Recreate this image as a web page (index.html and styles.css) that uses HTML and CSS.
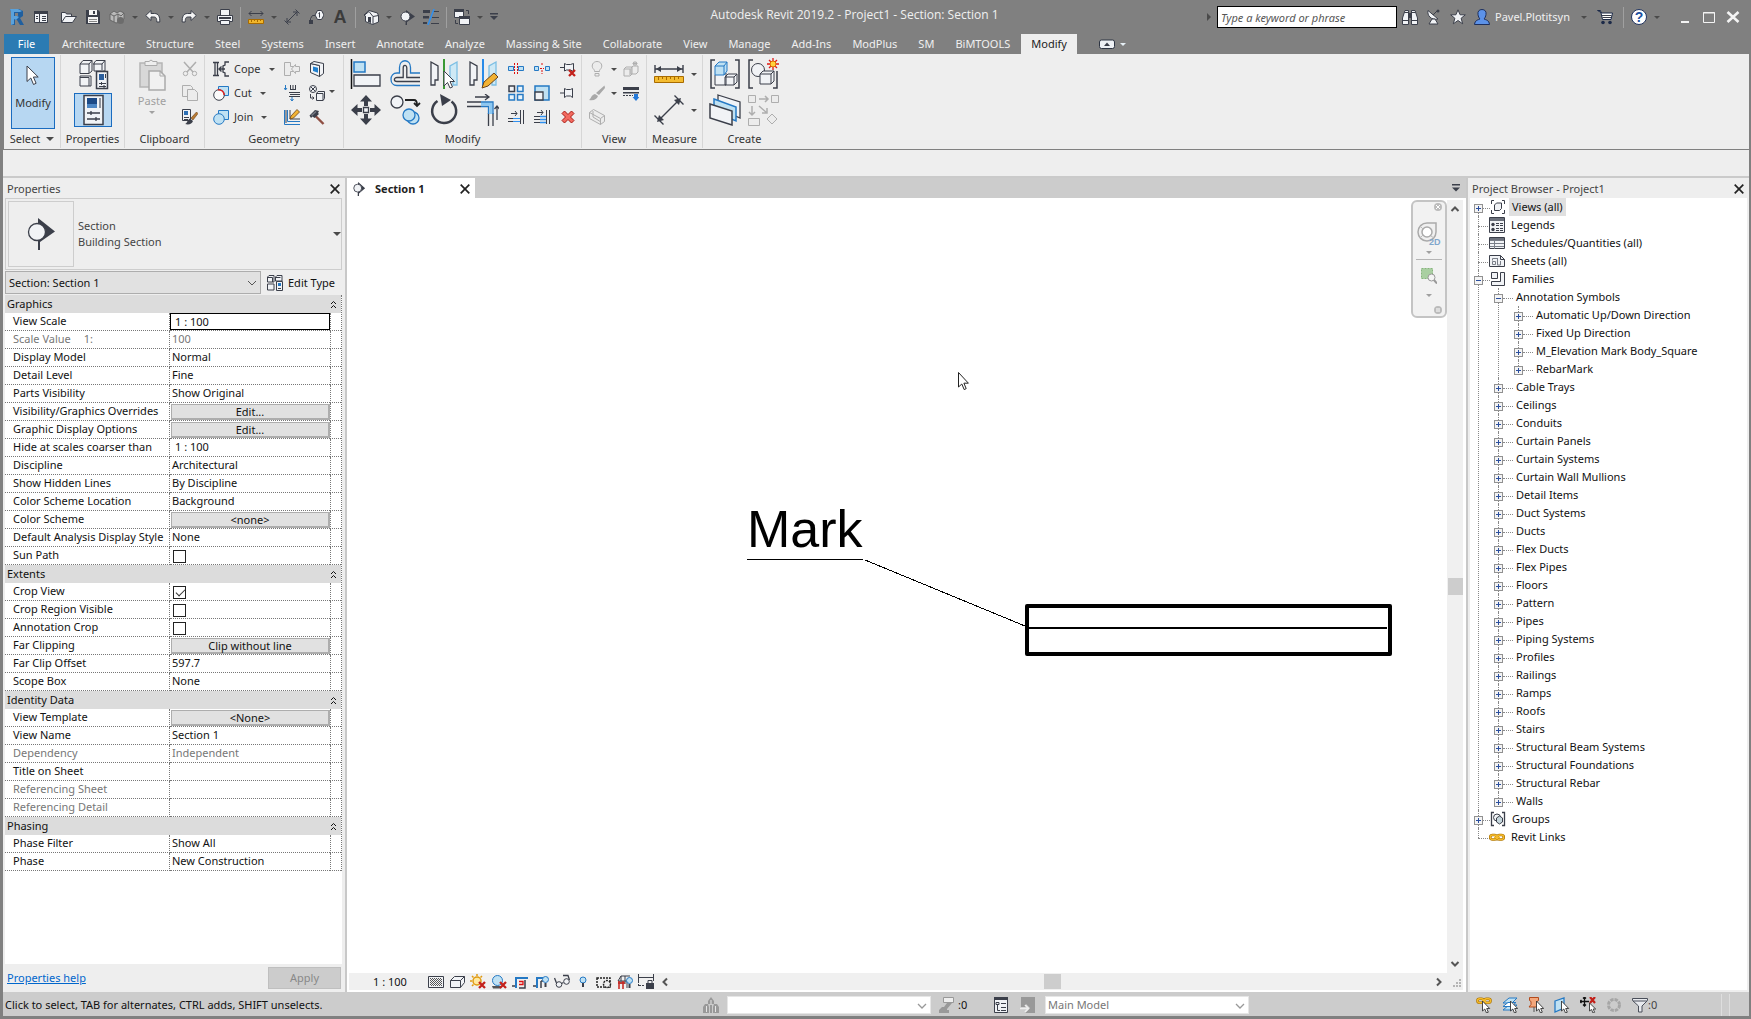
FILE: index.html
```html
<!DOCTYPE html>
<html lang="en">
<head>
<meta charset="utf-8">
<title>Autodesk Revit 2019.2 - Project1 - Section: Section 1</title>
<link rel="stylesheet" href="styles.css">
</head>
<body>
<div class="window">

<header class="titlebar">
  <div class="qat">
    <button class="cell" aria-label="Revit"><svg class="i16" viewBox="0 0 16 16"><path fill="#1f5f9f" d="M1 0h9l4 2v5l-3 2 4 7h-4L8 11H6v5H2V3z"/><path fill="#5aa2dc" d="M1 0h8l4 2-2 1H5v4h3l2 1-3 3-2-1v5l-3 1V3z"/><path fill="#808080" d="M6 4h3v3H6z"/></svg></button>
    <button class="cell after-gap" aria-label="Home"><svg class="i16" viewBox="0 0 16 16"><path class="kf" d="M1.500 2.500h13v11h-13z"/><path class="d" d="M1 2h14v3H1z"/><path class="k" d="M6.500 5v8M9 7.500h4M9 9.500h4M9 11.500h4M3 7.500h2M3 9.500h2"/></svg></button>
    <button class="cell" aria-label="Open"><svg class="i16" viewBox="0 0 16 16"><path class="kf" d="M.5 13.500v-10h4l1 1.500h5v3"/><path class="kf" d="M.5 13.500l4-6h11l-4 6z"/></svg></button>
    <button class="cell" aria-label="Save"><svg class="i16" viewBox="0 0 16 16"><path class="d" d="M1 1h12l2 2v12H1z"/><path fill="#f4f4f4" d="M4 1h8v5H4zM3 8h10v6H3z"/><path class="d" d="M8 2h2v3H8z"/><path stroke="#888" d="M4 10.500h8M4 12.500h8"/></svg></button>
    <button class="cell" aria-label="Synchronize"><svg class="i16" viewBox="0 0 16 16"><path fill="#b9b9b9" stroke="#676767" d="M1 5l4-3 3 2 3-2 4 2v6l-4 3-4 1-6-3z"/><path fill="none" stroke="#676767" d="M1 5l4 2 4-2 3 2 3-3M5 7v6M9 5v8"/><circle cx="11.500" cy="11.500" r="3.500" fill="#6c6c6c"/></svg></button>
    <span class="drop"><i class="tri"></i></span>
    <button class="cell" aria-label="Undo"><svg class="i16" viewBox="0 0 16 16"><path fill="#f4f4f4" stroke="#3b3f4a" d="M.7 6.500L6 1.500v3h3.500c4 0 5.500 3 5.300 8.500h-3c0-4-.8-5-3-5H6v3.500z"/></svg></button>
    <span class="drop"><i class="tri"></i></span>
    <button class="cell" aria-label="Redo"><svg class="i16" viewBox="0 0 16 16"><path fill="#f4f4f4" stroke="#3b3f4a" d="M15.300 6.500L10 1.500v3H6.500C2.500 4.500 1 7.500 1.200 13h3c0-4 .8-5 3-5H10v3.500z"/></svg></button>
    <span class="drop"><i class="tri"></i></span>
    <button class="cell" aria-label="Print"><svg class="i16" viewBox="0 0 16 16"><path class="kf" d="M3.500 7V.5h9V7M.5 6.500h15v6H.5z"/><path class="d" d="M2 8h12v2H2z"/><path class="kf" d="M3.500 11.500h9v4h-9z"/></svg></button>
    <i class="bar"></i>
    <button class="cell" aria-label="Measure"><svg class="i16" viewBox="0 0 16 16"><path class="k" d="M1 4.500h14M3.500 2L1 4.500 3.500 7M12.500 2L15 4.500 12.500 7"/><path fill="#f0b62c" stroke="#a86b00" d="M.5 10.500h15v4H.5z"/><path stroke="#a86b00" d="M3.500 10v3M6.500 10v2M9.500 10v3M12.500 10v2"/></svg></button>
    <span class="drop"><i class="tri"></i></span>
    <button class="cell" aria-label="Aligned Dimension"><svg class="i16" viewBox="0 0 16 16"><path class="k" d="M3 13L13 3M3 9v4h4M9 3h4v4M.5 11.500l4 4M11.500.5l4 4"/></svg></button>
    <button class="cell" aria-label="Tag by Category"><svg class="i16" viewBox="0 0 16 16"><path class="k" d="M2.500 13V9.500l2-3h3"/><path class="d" d="M1 11h4v4H1z"/><path class="kf" d="M7 6l2.500-4.500h4L16 6l-2.500 4.500h-4z"/><path class="k" d="M10.500 4.500l1-1v5"/></svg></button>
    <button class="cell glyph-a" aria-label="Text">A</button>
    <i class="bar"></i>
    <button class="cell" aria-label="Default 3D View"><svg class="i16" viewBox="0 0 16 16"><path class="kf" d="M1 6l5-4.500L14.500 4 15.500 7v6l-6 2.500-7-3V7z"/><path class="k" d="M1 6.500l5-4 4 5v8M10 7.500l5.500-1"/><path class="d" d="M5 8h3v6l-3-1z"/></svg></button>
    <span class="drop"><i class="tri"></i></span>
    <button class="cell" aria-label="Section"><svg class="i16" viewBox="0 0 16 16"><path class="d" d="M7 1l9 6.500L8 13v3H6.500z"/><circle class="kf" cx="6.500" cy="7.500" r="4.500"/></svg></button>
    <button class="cell" aria-label="Thin Lines"><svg class="i16" viewBox="0 0 16 16"><path class="d" d="M0 1h7v3H0zM0 7h6v2.500H0zM0 13h4v2H0z"/><path class="k" d="M10 2.500h6M9 8.500h7M8 14.500h8"/><path stroke="#2f90f0" stroke-width="1.500" d="M11 0L5 16"/></svg></button>
    <i class="bar"></i>
    <button class="cell" aria-label="Switch Windows"><svg class="i16" viewBox="0 0 16 16"><path class="kf" d="M.5.5h9v8h-9z"/><path class="d" d="M0 0h10v3H0zM5 7h11v3H5z"/><path class="kf" d="M5.500 9.500h10v6h-10z"/><path class="k" d="M12 1.500h2.500V5M1.500 11v3.500H4"/></svg></button>
    <span class="drop"><i class="tri"></i></span>
    <button class="cell narrow" aria-label="Customize toolbar"><svg class="i10" viewBox="0 0 10 10"><path class="d" d="M1 1h8v1.500H1zM1 4h8L5 8z"/></svg></button>
  </div>
  <h1 class="caption">Autodesk Revit 2019.2 - Project1 - Section: Section 1</h1>
  <div class="infocenter">
    <i class="tri-right"></i>
    <input class="search" type="text" placeholder="Type a keyword or phrase" aria-label="Search">
    <button class="cell" aria-label="Find"><svg class="i16" viewBox="0 0 16 16"><path class="kf" d="M.5 15.500V9L3 1.500h3.500v14zM15.500 15.500V9L13 1.500H9.500v14z"/><path class="d" d="M6 4h4v5H6z"/><path class="k" d="M0 11.500h6M10 11.500h6M2.500 3.500h4M9.500 3.500h4"/></svg></button>
    <button class="cell" aria-label="Subscription"><svg class="i16" viewBox="0 0 16 16"><path class="kf" d="M2 1.500c-1 5 3 10 10 8.500z"/><path class="k" d="M7 6l5-5"/><circle class="d" cx="12" cy="2" r="1.500"/><path class="kf" d="M6 10l-3 5h9l-3-5z"/></svg></button>
    <button class="cell" aria-label="Favorites"><svg class="i16" viewBox="0 0 16 16"><path class="kf" d="M8 .8l2.100 5h5.200l-4.200 3.500 1.600 5.500L8 11.500l-4.700 3.300 1.600-5.500L.7 5.800h5.200z"/></svg></button>
    <button class="cell user" aria-label="Signed in as Pavel.Plotitsyn"><svg class="i16" viewBox="0 0 16 16"><path fill="#5c92e8" stroke="#1d2f5c" d="M8 .5c3 0 4.500 2 4 5-.3 2-1 3.500-2 4.500 2 1 5 1 5.500 5.500H.5C1 11 4 11 6 10 5 9 4.300 7.500 4 5.500c-.5-3 1-5 4-5z"/></svg><span>Pavel.Plotitsyn</span></button>
    <span class="drop wide"><i class="tri"></i></span>
    <button class="cell" aria-label="App Store"><svg class="i16" viewBox="0 0 16 16"><path fill="#fff" stroke="#1c2a48" d="M.5 1.500h3l2 9h8.500l1.500-6.500H5z"/><path class="k" d="M5 6.500h9.500M5.500 8.500H14"/><circle cx="6" cy="13.500" r="1.800" fill="#1c2a48"/><circle cx="13" cy="13.500" r="1.800" fill="#1c2a48"/></svg></button>
    <i class="bar roomy"></i>
    <button class="cell" aria-label="Help"><svg class="i16" viewBox="0 0 16 16"><circle cx="8" cy="8" r="7.500" fill="#fff" stroke="#223560"/><text x="8" y="13" text-anchor="middle" class="glyph-q">?</text></svg></button>
    <span class="drop"><i class="tri"></i></span>
    <div class="winbtns">
      <button aria-label="Minimize"><svg class="i14" viewBox="0 0 14 14"><path stroke="#f4f4f4" stroke-width="2" d="M3 12h8"/></svg></button>
      <button aria-label="Maximize"><svg class="i14" viewBox="0 0 14 14"><path stroke="#f4f4f4" fill="none" d="M1.500 2.500h11v10h-11z"/><path stroke="#f4f4f4" d="M1 3h12"/></svg></button>
      <button aria-label="Close"><svg class="i14" viewBox="0 0 14 14"><path stroke="#f4f4f4" stroke-width="2.600" d="M1.500 2l11 10M12.500 2l-11 10"/></svg></button>
    </div>
  </div>
</header>

<nav class="tabs">
  <button class="tab file">File</button>
  <button class="tab">Architecture</button>
  <button class="tab">Structure</button>
  <button class="tab">Steel</button>
  <button class="tab">Systems</button>
  <button class="tab">Insert</button>
  <button class="tab">Annotate</button>
  <button class="tab">Analyze</button>
  <button class="tab">Massing &amp; Site</button>
  <button class="tab">Collaborate</button>
  <button class="tab">View</button>
  <button class="tab">Manage</button>
  <button class="tab">Add-Ins</button>
  <button class="tab">ModPlus</button>
  <button class="tab">SM</button>
  <button class="tab">BiMTOOLS</button>
  <button class="tab active">Modify</button>
  <button class="tab state" aria-label="Minimize ribbon"><svg class="i16" viewBox="0 0 16 16"><rect x=".5" y="4" width="15" height="8.500" rx="2" fill="#eef1f5" stroke="#2d3442"/><path class="d" d="M5 10h6L8 6.500z"/></svg><i class="tri light"></i></button>
</nav>

<section class="ribbon">
  <div class="panel p-select">
    <div class="body">
      <button class="modify-btn"><svg class="cursor-ico" viewBox="0 0 14 22"><path fill="#fff" stroke="#3b3f4a" d="M1 1v15.500l3.800-3.500 2.700 6.500 2.600-1.200-2.700-6.300h4.800z"/></svg><span>Modify</span></button>
    </div>
    <h2>Select <i class="tri big"></i></h2>
  </div>
  <div class="panel p-props">
    <div class="body">
      <button class="props-ico" aria-label="Type Properties"><svg class="i32" viewBox="0 0 32 32"><path class="kf" d="M3 6l3-3.500h9V13l-3 2.500H3zM17 5l2-2.500h9V13H17zM3 18h11v10H3z"/><path class="k" d="M3 6h9v9M12 6l3-3.500M3 19.500h9v8.500M16 6h9v6M25 6l3-3.500"/><path class="kf" stroke-width="1.500" d="M19.500 13.500h11v17h-11z"/><path fill="#2c5f9e" d="M22 16h5v6h-5z"/><path class="k" d="M28.500 16v4M22 25.500h7M22 28.500h7M24.500 24v3M27 27v3"/></svg></button>
      <button class="props-on" aria-label="Properties"><svg class="i32" viewBox="0 0 32 32"><path class="kf" stroke-width="1.500" d="M7 1.500h19v29H7z"/><path fill="#1d4a86" d="M10 4h10v10H10z"/><path fill="#4d86c4" d="M10 10h10v4H10z"/><path fill="none" stroke="#6f7480" stroke-width="1.500" d="M23 4v10"/><path class="k" stroke-width="1.300" d="M10 19h13M10 25h13M14 17v4M19 23v4"/></svg></button>
    </div>
    <h2>Properties</h2>
  </div>
  <div class="panel p-clip">
    <div class="body">
      <button class="paste" disabled><svg class="i32" viewBox="0 0 32 32"><path fill="#d8d8d8" stroke="#b5b5b5" stroke-width="1.500" d="M4 4h22v24H4z"/><path fill="#eee" stroke="#aaa" d="M9 2.500h4L15 1l2 1.500h4v4H9z"/><path fill="#f1f1f1" stroke="#aaa" stroke-width="1.500" d="M13 12h11l5 5v14H13z"/><path fill="none" stroke="#aaa" d="M24 12v5h5"/></svg><span>Paste</span><i class="tri grey"></i></button>
      <div class="col3">
        <button aria-label="Cut to Clipboard"><svg class="i16" viewBox="0 0 16 16"><path class="g" stroke-width="1.500" d="M2 1l9 10M14 1L5 11"/><circle class="g" cx="3.500" cy="12.500" r="2.200"/><circle class="g" cx="12.500" cy="12.500" r="2.200"/></svg></button>
        <button aria-label="Copy to Clipboard"><svg class="i16" viewBox="0 0 16 16"><path class="gf" d="M.5.5h8l2 2v9H.5z"/><path class="gf" d="M5.500 4.500h7l3 3v8h-10z"/></svg></button>
        <button aria-label="Match Type Properties"><svg class="i16" viewBox="0 0 16 16"><path class="kf" d="M.5.500h8v11h-8z"/><path fill="#2c6fb4" d="M2 2h4v4H2z"/><path class="k" d="M2 8.500h5M2 10.500h4"/><path fill="#b87a33" stroke="#6b431a" stroke-width=".6" d="M9 9l5.500-6 1.500 1.500L11 11z"/><path class="d" d="M3 15c2 0 2-4 5-5.500L11 12c-1 3-4 4-8 3z"/></svg></button>
      </div>
    </div>
    <h2>Clipboard</h2>
  </div>
  <div class="panel p-geo">
    <div class="body">
      <div class="col3 named">
        <button><svg class="i16" viewBox="0 0 16 16"><path class="k" stroke-width="1.300" d="M0 1.500h6M0 14.500h6M2 1.500v13M4.500 1.500v13M16 1h-4v3l-2 1v6l2 1v3h4"/><path class="k" stroke-width="1.400" d="M6 8h6M8.500 5.500L6 8l2.500 2.500"/></svg><span>Cope</span><i class="tri"></i></button>
        <button><svg class="i16" viewBox="0 0 16 16"><path class="bf" d="M5.500 1.500h10v9h-10z"/><circle cx="6" cy="10" r="5.300" fill="#fafafa" stroke="#3b3f4a"/><path fill="none" stroke="#e02020" stroke-width="1.500" d="M5 4.700c3.500-.3 6 2 6.200 5.300"/></svg><span>Cut</span><i class="tri"></i></button>
        <button><svg class="i16" viewBox="0 0 16 16"><path class="bf" d="M5.500 1.500h10v9h-10z"/><circle class="bf" cx="6" cy="10" r="5.300"/></svg><span>Join</span><i class="tri"></i></button>
      </div>
      <div class="col3">
        <button aria-label="Wall Joins"><svg class="i16" viewBox="0 0 16 16"><path class="gf" d="M.5 1.500h6v4h4v5h-4v4h-6z"/><path class="gf" d="M15.500 5.500h-4v-2L7.500 8l4 4.500v-2h4z"/></svg></button>
        <button aria-label="Beam Joins"><svg class="i16" viewBox="0 0 16 16"><path class="k" d="M5 7.500h11M5 11.500h11M6 9.500h10M6.500 0v4M9 0v4M11.500 0v4M6 4.500h6"/><path class="b" d="M1.500 0v5M0 3l1.500 2L3 3M8 12v4M6.500 14L8 16l1.500-2"/></svg></button>
        <button aria-label="Edit Joins"><svg class="i16" viewBox="0 0 16 16"><path class="b" d="M.5 1v14.500H16M3.500 1v11.500H16"/><path class="k" d="M6 1v9h10M2 1v13"/><path fill="#f2b233" stroke="#6b431a" stroke-width=".8" d="M6 10l1-3 6-6.500L15.500 3l-6 6z"/></svg></button>
      </div>
      <div class="col3">
        <button aria-label="Split Face"><svg class="i16" viewBox="0 0 16 16"><path class="kf" d="M1.500 2.500l9 2v11l-9-4z"/><path class="kf" d="M1.500 2.500L5 .5l9.500 2v10l-4 3v-11z"/><path fill="#1f80d0" d="M4 5.500l5 1.300v5L4 10z"/></svg></button>
        <button aria-label="Paint"><svg class="i16" viewBox="0 0 16 16"><circle class="kf" cx="4" cy="4" r="3.500"/><path class="k" d="M2 2l4 4M2 6l4-4M1.500 9v4H5M3.500 11.500L5 13l-1.500 1.500"/><path class="kf" d="M7.500 8.500l1.500-2h6.500v7L14 15.500H7.500z"/><path class="k" d="M7.500 8.500H14v7"/></svg></button>
        <button aria-label="Demolish"><svg class="i16" viewBox="0 0 16 16"><path stroke="#8f4f43" stroke-width="2.400" d="M6 6.500l8.500 8.500"/><path class="d" d="M.5 6.500L6 1l4 1-1 2 1 1-4.500 4-2-1.500L2 9z"/><path stroke="#777b85" stroke-width="1.500" d="M2.500 6.500L7 2.500"/></svg></button>
      </div>
      <span class="mid-tri"><i class="tri"></i></span>
    </div>
    <h2>Geometry</h2>
  </div>
  <div class="panel p-mod">
    <div class="body">
      <div class="big-grid">
        <button aria-label="Align"><svg class="i32" viewBox="0 0 32 32"><path stroke="#111" stroke-width="1.500" d="M1.500 1v30"/><path class="bf" stroke-width="1.500" d="M4 4h11v10H4z"/><path class="kf" stroke-width="1.300" d="M4 17h26v11H4z"/></svg></button>
        <button aria-label="Offset"><svg class="i32" viewBox="0 0 32 32"><path fill="none" stroke="#2579c4" stroke-width="1.300" d="M31 15h-9.500V9.500c0-9-11-9-11 0V15H8C0 15 0 27.500 8 27.500h23"/><path fill="none" stroke="#3b3f4a" stroke-width="1.300" d="M31 19.500H17.800V10c0-3.500-3.600-3.500-3.600 0v9.500H8c-3.500 0-3.500 4 0 4h23"/></svg></button>
        <button aria-label="Mirror - Pick Axis"><svg class="i32" viewBox="0 0 32 32"><path class="kf" stroke-width="1.300" d="M3 4l7 4v14H7v5H3z"/><path fill="#cfe9f5" stroke="#7dbfe4" stroke-width="1.300" d="M29 4l-7 4v14h3v5h4z"/><path stroke="#3a9a34" stroke-width="2" d="M16 1v30"/><path fill="#fff" stroke="#3b3f4a" d="M16 13v15l3.500-3.500 2.500 5.500 2.500-1-2.500-5.500h4.500z"/></svg></button>
        <button aria-label="Mirror - Draw Axis"><svg class="i32" viewBox="0 0 32 32"><path class="kf" stroke-width="1.300" d="M3 4l7 4v14H7v5H3z"/><path fill="#cfe9f5" stroke="#7dbfe4" stroke-width="1.300" d="M29 4l-7 4v14h3v5h4z"/><path stroke="#2a8be8" stroke-width="2" d="M16 1v28"/><path fill="#f2b233" stroke="#6b431a" d="M15 30l2-6 10-9 4 4-10 9z"/></svg></button>
        <button aria-label="Move"><svg class="i32" viewBox="0 0 32 32"><path class="d" d="M16 1l6 6.500h-4V12h-4V7.500h-4zM16 31l6-6.500h-4V20h-4v4.500h-4zM1 16l6.500-6v4H12v4H7.500v4zM31 16l-6.500-6v4H20v4h4.500v4z"/><path class="kf" stroke-width="1.300" d="M13.500 13.500h5v5h-5z"/></svg></button>
        <button aria-label="Copy"><svg class="i32" viewBox="0 0 32 32"><circle class="kf" cx="8" cy="8" r="6" stroke-width="1.300"/><path fill="none" stroke="#222" stroke-width="1.800" d="M16 6h9c2 0 3 1 3 5M25 9l3 3 3-3"/><circle class="bf" cx="24" cy="24" r="6" stroke-width="1.300"/><circle class="bf" cx="20" cy="21" r="6" stroke-width="1.300"/></svg></button>
        <button aria-label="Rotate"><svg class="i32" viewBox="0 0 32 32"><path fill="none" stroke="#3b3f4a" stroke-width="2.500" d="M23.500 7.500a12 12 0 1 1-14-.5"/><path class="d" d="M12 0l11 6-9 6z"/></svg></button>
        <button aria-label="Trim/Extend to Corner"><svg class="i32" viewBox="0 0 32 32"><path class="k" stroke-width="1.300" d="M0 8h14M0 12.500h14M21.500 19v13M26 19v13M8 3h13M18 0l4 3-4 3M30 26V12M27.500 15l2.500-3 2.500 3"/><path fill="none" stroke="#8cc8f2" stroke-width="3" d="M14 10h10v10"/><path fill="none" stroke="#2579c4" stroke-width="1.300" d="M14 8h12v12M14 12.500h7.500V20"/></svg></button>
      </div>
      <div class="small-grid">
        <button aria-label="Split Element"><svg class="i16" viewBox="0 0 16 16"><path class="bf" d="M.5 5.500h5v4h-5zM10.500 5.500h5v4h-5z"/><path stroke="#d11" stroke-dasharray="2 1" d="M6.500 2v11M9.500 2v11"/></svg></button>
        <button aria-label="Split with Gap"><svg class="i16" viewBox="0 0 16 16"><path class="bf" d="M.5 5.500h4v4h-4zM11.500 5.500h4v4h-4z"/><path stroke="#d11" stroke-dasharray="2 1" d="M8 2v3M8 9v4M6 7.500h4"/></svg></button>
        <button aria-label="Unpin"><svg class="i16" viewBox="0 0 16 16"><path class="kf" d="M4.500 2.500l2 1h4l3-1v8l-3-1.500h-4l-2 1zM0 6.500h4"/><path stroke="#c3201a" stroke-width="2.300" d="M9 9l6 6M15 9l-6 6"/></svg></button>
        <button aria-label="Array"><svg class="i16" viewBox="0 0 16 16"><path class="kf" stroke-width="1.500" d="M1 1h5.500v5.500H1z"/><path fill="#e8f4fb" stroke="#2579c4" stroke-width="1.500" d="M9.500 1H15v5.500H9.500zM1 9.500h5.500V15H1zM9.500 9.500H15V15H9.500z"/></svg></button>
        <button aria-label="Scale"><svg class="i16" viewBox="0 0 16 16"><path class="bf" stroke-width="1.500" d="M1 1h14v14H1z"/><path class="kf" stroke-width="1.300" d="M1 7h8v8H1z"/></svg></button>
        <button aria-label="Pin"><svg class="i16" viewBox="0 0 16 16"><path class="kf" d="M4.500 3.500l2 1h4l2-1v9l-2-1.500h-4l-2 1.500zM0 8h4"/></svg></button>
        <button aria-label="Trim Single"><svg class="i16" viewBox="0 0 16 16"><path class="k" d="M12.500 1v14M15.500 1v14M3 4.500h6M7 2l2 2.500L7 7M0 9.500h5M0 12.500h5"/><path stroke="#2f90f0" d="M5 9.500h7M5 12.500h7"/></svg></button>
        <button aria-label="Trim Multiple"><svg class="i16" viewBox="0 0 16 16"><path class="k" d="M12.500 1v14M15.500 1v14M3 3.500h6M7 1l2 2.500L7 6M0 7.500h6M0 10.500h6M0 13.500h6"/><path stroke="#2f90f0" stroke-width="1.500" d="M6 7.500h6M6 10.500h6M6 13.500h6"/></svg></button>
        <button aria-label="Delete"><svg class="i16" viewBox="0 0 16 16"><path fill="#f36a60" stroke="#a81a12" d="M2 4.500L4.500 2 8 5.500 11.500 2 14 4.500 10.500 8l3.500 3.500-2.500 2.500L8 10.500 4.500 14 2 11.500 5.500 8z"/></svg></button>
      </div>
    </div>
    <h2>Modify</h2>
  </div>
  <div class="panel p-view">
    <div class="body">
      <div class="view-grid">
        <button aria-label="Hide in View"><svg class="i16" viewBox="0 0 16 16"><path class="gf" d="M8 .5c4 0 6 4 4 7-1.500 1.500-1.500 2-1.500 3h-5c0-1 0-1.500-1.500-3-2-3 0-7 4-7zM6 12.500h4v2.500H6z"/></svg></button><i class="tri mid"></i>
        <button aria-label="Displace Elements"><svg class="i16" viewBox="0 0 16 16"><path class="gf" d="M1 8l2-2h6v7l-2 2H1zM8 7l2-2h5v6l-2 2H8z"/><path class="g" d="M12 0v5M9.500 2.500h5M10 1l4 3M14 1l-4 3M1 8h6v6"/></svg></button>
        <button aria-label="Override Graphics"><svg class="i16" viewBox="0 0 16 16"><path fill="#a8a8a8" d="M15.500.500L16 3l-6 7-3-2zM0 15c2-1 2-5 6-6l3 2c-1 3-4 5-9 4z"/></svg></button><i class="tri mid"></i>
        <button aria-label="Linework"><svg class="i16" viewBox="0 0 16 16"><path class="d" d="M0 2h16v3H0zM0 7h16v1.500H0z"/><path class="k" stroke-dasharray="2 1" d="M0 10.500h10"/><path fill="#2579d8" d="M11 9h4v3h1.500L13 16l-3.500-4H11z"/></svg></button>
        <button aria-label="Selection Box"><svg class="i16" viewBox="0 0 16 16"><path class="gf" d="M.5 3.500l4-3 11 6v6l-4 3-11-6z"/><path class="g" d="M.5 3.500l11 6v6M11.500 9.500l4-3M4 2v6l8 5"/></svg></button>
      </div>
    </div>
    <h2>View</h2>
  </div>
  <div class="panel p-meas">
    <div class="body">
      <div class="meas-grid">
        <button aria-label="Measure Between"><svg class="i32" viewBox="0 0 32 32"><path class="k" stroke-width="1.400" d="M2 11h28M2 7v8M30 7v8"/><path class="d" d="M3 11l5-3v6zM29 11l-5-3v6z"/><path fill="#f4bc30" stroke="#a86b00" d="M1.500 18.500h29v6h-29z"/><path stroke="#a86b00" d="M5.500 19v3M9.500 19v2M13.500 19v3M17.500 19v2M21.500 19v3M25.500 19v2"/></svg></button><i class="tri mid"></i>
        <button aria-label="Aligned Dimension"><svg class="i32" viewBox="0 0 32 32"><path class="k" stroke-width="1.400" d="M6 26L26 6M1.500 21.500l9 9M21.500 1.500l9 9"/><path class="d" d="M4 28l2-7 5 5zM28 4l-2 7-5-5z"/></svg></button><i class="tri mid"></i>
      </div>
    </div>
    <h2>Measure</h2>
  </div>
  <div class="panel p-create">
    <div class="body">
      <div class="create-grid">
        <button aria-label="Create Assembly"><svg class="i32" viewBox="0 0 32 32"><path class="k" stroke-width="1.500" d="M6 2H2v28h4M26 2h4v28h-4"/><path class="kf" d="M6 17l2-2h9v12H6zM16 19l3-3h9v8l-3 3H16z"/><path class="bf" d="M6 8l4-4h8v9l-3 4H6z"/><path fill="none" stroke="#2579c4" d="M6 8h9v9M15 8l3-4"/><path class="k" d="M16 19h9v8M25 19l3-3"/></svg></button>
        <button aria-label="Create Group"><svg class="i32" viewBox="0 0 32 32"><path class="k" stroke-width="1.500" d="M6 2H2v28h4M26 30h4V13"/><circle class="kf" cx="11" cy="12" r="6.500"/><path class="kf" d="M13 16l3-3h11v10l-3 3H13z"/><path class="k" d="M13 16h11v10M24 16l3-3"/><path stroke="#e01818" stroke-width="1.300" d="M26 0v12M20 6h12M22 2l8 8M30 2l-8 8"/><circle cx="26" cy="6" r="3" fill="#ffd23c" stroke="#e06a00"/></svg></button>
        <button aria-label="Create Similar"><svg class="i32" viewBox="0 0 32 32"><path class="kf" stroke-width="1.300" d="M9 1l22 7v16L9 14z"/><path class="bf" stroke-width="1.500" d="M5 5l22 8v14L5 18z"/><path class="kf" stroke-width="1.500" d="M1 10l22 7v14L1 24z"/></svg></button>
        <button aria-label="Create Parts"><svg class="i32" viewBox="0 0 32 32"><path class="gf" d="M1.500 1.500h7v7h-7zM24.500 1.500h7v7h-7zM1.500 24.500h11v7h-11zM25 20l5 5-5 5-5-5z"/><path class="g" stroke-width="1.500" d="M12 5h9M18 2l3 3-3 3M5 12v9M2 18l3 3 3-3M12 12l8 7M20 14v5h-5"/></svg></button>
      </div>
    </div>
    <h2>Create</h2>
  </div>
</section>
<div class="options-bar"></div>

<main class="workspace">
  <aside class="properties">
    <div class="pane-title"><h2>Properties</h2><button aria-label="Close Properties"><svg class="i10" viewBox="0 0 10 10"><path stroke="#222" stroke-width="1.700" d="M.7.700l8.600 8.600M9.300.700L.7 9.300"/></svg></button></div>
    <button class="type-box" aria-label="Type selector">
      <span class="thumb"><svg class="i32" viewBox="0 0 32 32"><path class="d" d="M13 0l17 13.500L15 24v8h-2z"/><circle class="kf" cx="12" cy="14" r="8.500" stroke-width="1.300"/></svg></span>
      <span class="type-name">Section<br>Building Section</span>
      <i class="tri big"></i>
    </button>
    <div class="instance">
      <div class="select-wrap"><select aria-label="Instance"><option>Section: Section 1</option></select><svg class="i10" viewBox="0 0 10 10"><path fill="none" stroke="#555" d="M1 3l4 4 4-4"/></svg></div>
      <button class="edit-type"><svg class="i16" viewBox="0 0 16 16"><path class="kf" d="M.5 2L2 .5h5V7H.5zM8.500 2L10 .5h5V6H8.500zM.5 9H7v6H.5z"/><path class="k" d="M.5 2.500h5V7M8.500 2.500h5"/><path class="kf" d="M9.500 6.500h6v9h-6z"/><path fill="#2579c4" d="M11 8h3v3h-3z"/><path class="k" d="M11 13.500h3"/></svg><span>Edit Type</span></button>
    </div>
    <div class="grid-scroll">
    <table class="props">
      <colgroup><col class="c-name"><col><col class="c-end"></colgroup>
      <tbody>
        <tr class="group"><th colspan="2">Graphics</th><td><svg class="chev" viewBox="0 0 7 9"><path d="M1 4l2.500-2.500L6 4M1 8l2.500-2.500L6 8"/></svg></td></tr>
        <tr><th><label for="scale">View Scale</label></th><td class="focus"><input id="scale" type="text" value="1 : 100"></td><td></td></tr>
        <tr class="off"><th>Scale Value<span class="unit">1:</span></th><td>100</td><td></td></tr>
        <tr><th>Display Model</th><td>Normal</td><td></td></tr>
        <tr><th>Detail Level</th><td>Fine</td><td></td></tr>
        <tr><th>Parts Visibility</th><td>Show Original</td><td></td></tr>
        <tr><th>Visibility/Graphics Overrides</th><td class="act"><button>Edit...</button></td><td></td></tr>
        <tr><th>Graphic Display Options</th><td class="act"><button>Edit...</button></td><td></td></tr>
        <tr><th>Hide at scales coarser than</th><td class="in">1 : 100</td><td></td></tr>
        <tr><th>Discipline</th><td>Architectural</td><td></td></tr>
        <tr><th>Show Hidden Lines</th><td>By Discipline</td><td></td></tr>
        <tr><th>Color Scheme Location</th><td>Background</td><td></td></tr>
        <tr><th>Color Scheme</th><td class="act"><button>&lt;none&gt;</button></td><td></td></tr>
        <tr><th>Default Analysis Display Style</th><td>None</td><td></td></tr>
        <tr><th><label for="sun">Sun Path</label></th><td class="chk"><input id="sun" type="checkbox"></td><td></td></tr>
      </tbody>
      <tbody>
        <tr class="group"><th colspan="2">Extents</th><td><svg class="chev" viewBox="0 0 7 9"><path d="M1 4l2.500-2.500L6 4M1 8l2.500-2.500L6 8"/></svg></td></tr>
        <tr><th><label for="crop">Crop View</label></th><td class="chk"><input id="crop" type="checkbox" checked></td><td></td></tr>
        <tr><th><label for="cropvis">Crop Region Visible</label></th><td class="chk"><input id="cropvis" type="checkbox"></td><td></td></tr>
        <tr><th><label for="anno">Annotation Crop</label></th><td class="chk"><input id="anno" type="checkbox"></td><td></td></tr>
        <tr><th>Far Clipping</th><td class="act"><button>Clip without line</button></td><td></td></tr>
        <tr><th>Far Clip Offset</th><td>597.7</td><td></td></tr>
        <tr><th>Scope Box</th><td>None</td><td></td></tr>
      </tbody>
      <tbody>
        <tr class="group"><th colspan="2">Identity Data</th><td><svg class="chev" viewBox="0 0 7 9"><path d="M1 4l2.500-2.500L6 4M1 8l2.500-2.500L6 8"/></svg></td></tr>
        <tr><th>View Template</th><td class="act"><button>&lt;None&gt;</button></td><td></td></tr>
        <tr><th>View Name</th><td>Section 1</td><td></td></tr>
        <tr class="off"><th>Dependency</th><td>Independent</td><td></td></tr>
        <tr><th>Title on Sheet</th><td></td><td></td></tr>
        <tr class="off"><th>Referencing Sheet</th><td></td><td></td></tr>
        <tr class="off"><th>Referencing Detail</th><td></td><td></td></tr>
      </tbody>
      <tbody>
        <tr class="group"><th colspan="2">Phasing</th><td><svg class="chev" viewBox="0 0 7 9"><path d="M1 4l2.500-2.500L6 4M1 8l2.500-2.500L6 8"/></svg></td></tr>
        <tr><th>Phase Filter</th><td>Show All</td><td></td></tr>
        <tr><th>Phase</th><td>New Construction</td><td></td></tr>
      </tbody>
    </table>
    </div>
    <div class="props-foot"><a href="#help">Properties help</a><button disabled>Apply</button></div>
  </aside>

  <section class="document">
    <div class="doc-tabs">
      <div class="doc-tab"><svg class="i14" viewBox="0 0 16 16"><path class="d" d="M7 0l8 7-7 6v3H6.500z"/><circle class="kf" cx="6.500" cy="7" r="4.500"/></svg><span>Section 1</span><button aria-label="Close view"><svg class="i10" viewBox="0 0 10 10"><path stroke="#222" stroke-width="1.700" d="M.7.700l8.600 8.600M9.300.700L.7 9.300"/></svg></button></div>
      <button class="doc-list" aria-label="Tab list"><svg class="i10" viewBox="0 0 10 10"><path class="d" d="M1 1h8v1.500H1zM1 4.500h8L5 8.500z"/></svg></button>
    </div>
    <div class="view-row">
      <div class="canvas">
        <svg class="drawing">
          <text class="mark-text" x="400" y="349">Mark</text>
          <path stroke="#000" shape-rendering="crispEdges" d="M400 361.500h116M518 362l160 66"/>
          <rect x="680" y="408" width="363" height="48" fill="none" stroke="#000" stroke-width="4" stroke-linejoin="round"/>
          <path stroke="#000" stroke-width="2" d="M681 430h359"/>
          <path fill="#fff" stroke="#222" d="M611.500 174.500v14.500l3.300-3 2.400 5.600 2-1-2.300-5.400h4.500z"/>
        </svg>
        <div class="navbar">
          <button class="corner" aria-label="Close navigation bar"><svg class="i10" viewBox="0 0 10 10"><circle cx="5" cy="5" r="4" fill="#bbb"/><path stroke="#fff" d="M3 3l4 4M7 3L3 7"/></svg></button>
          <button class="wheel" aria-label="Steering wheel 2D"><svg class="i24" viewBox="0 0 24 24"><path fill="#f0f0f0" stroke="#aaa" stroke-width="1.500" d="M10 1h9v9a9 9 0 1 1-9-9z"/><circle cx="10" cy="10" r="5" fill="#fff" stroke="#aaa" stroke-width="1.500"/><path stroke="#bbb" d="M3 4l3 3M14 14l3 2M3 16l3-3"/><text x="12" y="23" class="glyph-2d">2D</text></svg></button>
          <i class="tri grey"></i>
          <hr>
          <button class="zoom" aria-label="Zoom region"><svg class="i16" viewBox="0 0 16 16"><path fill="#a9cfa1" stroke="#86b57d" stroke-dasharray="2 1" d="M.5.500h11v10H.5z"/><circle cx="10.500" cy="9.500" r="3.500" fill="#f4f4f4" stroke="#999"/><path stroke="#999" stroke-width="2" d="M13 12l3 3.500"/></svg></button>
          <i class="tri grey"></i>
          <button class="corner low" aria-label="Navigation bar options"><svg class="i10" viewBox="0 0 10 10"><circle cx="5" cy="5" r="4" fill="#bbb"/><path stroke="#fff" d="M3 4h4M3 6h4"/></svg></button>
        </div>
      </div>
      <div class="vscroll"><svg class="i10" viewBox="0 0 10 10"><path class="arrow" d="M1.500 7L5 3.500 8.500 7"/></svg><i class="thumb-v"></i><svg class="i10" viewBox="0 0 10 10"><path class="arrow" d="M1.500 3L5 6.500 8.500 3"/></svg></div>
    </div>
    <div class="view-bar">
      <button class="scale">1 : 100</button>
      <div class="vicons">
        <button aria-label="Detail Level"><svg class="i16" viewBox="0 0 16 16"><path class="kf" d="M.5 2.500h15v11H.5z"/><path stroke="#555" stroke-dasharray="1 1" d="M2 4.500h12M2 6.500h12M2 8.500h12M2 10.500h12"/><path stroke="#555" stroke-dasharray="1 1" stroke-dashoffset="1" d="M2 5.500h12M2 7.500h12M2 9.500h12M2 11.500h12"/></svg></button>
        <button aria-label="Visual Style"><svg class="i16" viewBox="0 0 16 16"><path class="kf" d="M1.500 6.500l4-4h10v6l-4 5h-10z"/><path class="k" d="M1.500 6.500h10v7M11.500 6.500l4-4"/></svg></button>
        <button aria-label="Sun Path Off"><svg class="i16" viewBox="0 0 16 16"><circle cx="7" cy="7" r="4" fill="#ffe9a0" stroke="#e09a10" stroke-width="1.500"/><path stroke="#e09a10" stroke-width="1.500" d="M7 0v2M0 7h2M2 2l1.500 1.500M12 2l-1.500 1.500M2 12l1.500-1.500"/><path stroke="#c3201a" stroke-width="2.300" d="M9 8l6 6M15 8l-6 6"/></svg></button>
        <button aria-label="Shadows Off"><svg class="i16" viewBox="0 0 16 16"><path fill="#555" d="M1 12h9v2.500H2z"/><circle class="bf" cx="6.500" cy="6.500" r="5"/><path stroke="#c3201a" stroke-width="2.300" d="M9 8l6 6M15 8l-6 6"/></svg></button>
        <button aria-label="Crop View"><svg class="i16" viewBox="0 0 16 16"><path fill="none" stroke="#2579c4" stroke-width="2" d="M4 14V4h12"/><path class="k" stroke-width="1.500" d="M0 12h3M7 14h6V6"/><path fill="none" stroke="#d11" stroke-width="1.300" d="M7 7.500h4v3H7"/></svg></button>
        <button aria-label="Hide Crop Region"><svg class="i16" viewBox="0 0 16 16"><path fill="none" stroke="#2579c4" stroke-width="2" d="M4 14V4h6"/><path class="k" stroke-width="1.500" d="M0 12h3M8 7v7M8 7h2"/><circle class="bf" cx="12.500" cy="5.500" r="3"/><path class="k" stroke-width="2" d="M12.500 9v4"/></svg></button>
        <button aria-label="Temporary Hide/Isolate"><svg class="i16" viewBox="0 0 16 16"><path class="k" stroke-width="1.300" d="M.5 4l2 5M9 1.500h5L15.500 6M7.500 9.500l2-1"/><circle class="kf" cx="5" cy="10.500" r="2.800"/><circle class="kf" cx="12.500" cy="7.500" r="2.800"/></svg></button>
        <button aria-label="Reveal Hidden"><svg class="i16" viewBox="0 0 16 16"><circle class="bf" cx="8" cy="6" r="3"/><path class="k" stroke-width="2" d="M8 9v4"/></svg></button>
        <button aria-label="Temporary View Properties"><svg class="i16" viewBox="0 0 16 16"><path fill="none" stroke="#222" stroke-width="1.500" stroke-dasharray="2 1" d="M1 4h13v9H1z"/><circle cx="11" cy="10" r="3.500" fill="#eee" stroke="#222" stroke-width="1.500" stroke-dasharray="2 1"/></svg></button>
        <button aria-label="Analytical Model"><svg class="i16" viewBox="0 0 16 16"><path class="k" d="M1 7l3-5h9M1 7h9v7M4 2v8M8 2v8"/><path stroke="#c3201a" stroke-width="1.500" d="M2 7v8M6 7v8M1 9h7"/><circle class="bf" cx="12.500" cy="6.500" r="3"/><path class="k" stroke-width="2" d="M12.500 10v4"/></svg></button>
        <button aria-label="Constraints"><svg class="i16" viewBox="0 0 16 16"><path class="k" d="M.5 0v7M15.500 0v7M1 3.500h14"/><path class="k" stroke-dasharray="2 1" d="M.5 7v5M1 11.500h6"/><path class="d" d="M8 9h8v6H8z"/><path class="k" d="M10 9V6.500h4V9"/></svg></button>
      </div>
      <div class="hscroll"><svg class="i10" viewBox="0 0 10 10"><path class="arrow" d="M7 1.500L3.500 5 7 8.500"/></svg><i class="thumb-h"></i><svg class="i10" viewBox="0 0 10 10"><path class="arrow" d="M3 1.500L6.500 5 3 8.500"/></svg></div>
      <svg class="grip" viewBox="0 0 9 9"><path fill="#b5b5b5" d="M6 0h2v2H6zM3 3h2v2H3zM6 3h2v2H6zM0 6h2v2H0zM3 6h2v2H3zM6 6h2v2H6z"/></svg>
    </div>
  </section>

  <aside class="browser">
    <div class="pane-title"><h2>Project Browser - Project1</h2><button aria-label="Close Project Browser"><svg class="i10" viewBox="0 0 10 10"><path stroke="#222" stroke-width="1.700" d="M.7.700l8.600 8.600M9.300.700L.7 9.300"/></svg></button></div>
    <ul class="tree">
      <li><div class="node"><button class="tg plus" aria-label="Expand"></button><i class="stub"></i><svg class="i16" viewBox="0 0 16 16"><path class="k" d="M4 1.500H1.500V5M12 1.500h2.500V5M4 14.500H1.500V11M12 14.500h2.500V11"/><path class="kf" d="M4.500 6l2-2h5v5.500l-2 2h-5z"/></svg><span class="lb sel">Views (all)</span></div></li>
      <li><div class="node"><i class="stub leaf"></i><svg class="i16" viewBox="0 0 16 16"><path class="kf" d="M.5.500h15v15H.5z"/><path fill="#6a6f7a" d="M1 1h14v3H1z"/><circle class="d" cx="4" cy="7.500" r="1.700"/><circle class="d" cx="4" cy="12.500" r="1.700"/><path class="k" stroke-dasharray="3 1" d="M7 6.500h7M7 8.500h7M7 11.500h7M7 13.500h7"/></svg><span class="lb">Legends</span></div></li>
      <li><div class="node"><i class="stub leaf"></i><svg class="i16" viewBox="0 0 16 16"><path class="kf" d="M.5 2.500h15v11H.5z"/><path fill="#6a6f7a" d="M1 3h14v2H1z"/><path stroke="#7a7f89" d="M1 5.500h14M1 8.500h14M1 11.500h14M5.500 5v9"/></svg><span class="lb">Schedules/Quantities (all)</span></div></li>
      <li><div class="node"><i class="stub leaf"></i><svg class="i16" viewBox="0 0 16 16"><path class="kf" d="M.5 2.500h11l4 4v7H.5z"/><path class="k" d="M11.500 2.500v4h4"/><path fill="none" stroke="#7a7f89" d="M3.500 8.500v3h3v-3zM9 5.500H3.500v2M8.500 5v7h3V8"/></svg><span class="lb">Sheets (all)</span></div></li>
      <li><div class="node"><button class="tg minus" aria-label="Collapse"></button><i class="stub"></i><svg class="i16" viewBox="0 0 16 16"><path class="kf" d="M1.500 1.500h6v6h-6zM10.500 1.500h4v13h-13v-4h9z"/></svg><span class="lb">Families</span></div>
        <ul>
          <li><div class="node"><button class="tg minus" aria-label="Collapse"></button><i class="stub"></i><span class="lb">Annotation Symbols</span></div>
            <ul>
              <li><div class="node"><button class="tg plus" aria-label="Expand"></button><i class="stub"></i><span class="lb">Automatic Up/Down Direction</span></div></li>
              <li><div class="node"><button class="tg plus" aria-label="Expand"></button><i class="stub"></i><span class="lb">Fixed Up Direction</span></div></li>
              <li><div class="node"><button class="tg plus" aria-label="Expand"></button><i class="stub"></i><span class="lb">M_Elevation Mark Body_Square</span></div></li>
              <li><div class="node"><button class="tg plus" aria-label="Expand"></button><i class="stub"></i><span class="lb">RebarMark</span></div></li>
            </ul>
          </li>
          <li><div class="node"><button class="tg plus" aria-label="Expand"></button><i class="stub"></i><span class="lb">Cable Trays</span></div></li>
          <li><div class="node"><button class="tg plus" aria-label="Expand"></button><i class="stub"></i><span class="lb">Ceilings</span></div></li>
          <li><div class="node"><button class="tg plus" aria-label="Expand"></button><i class="stub"></i><span class="lb">Conduits</span></div></li>
          <li><div class="node"><button class="tg plus" aria-label="Expand"></button><i class="stub"></i><span class="lb">Curtain Panels</span></div></li>
          <li><div class="node"><button class="tg plus" aria-label="Expand"></button><i class="stub"></i><span class="lb">Curtain Systems</span></div></li>
          <li><div class="node"><button class="tg plus" aria-label="Expand"></button><i class="stub"></i><span class="lb">Curtain Wall Mullions</span></div></li>
          <li><div class="node"><button class="tg plus" aria-label="Expand"></button><i class="stub"></i><span class="lb">Detail Items</span></div></li>
          <li><div class="node"><button class="tg plus" aria-label="Expand"></button><i class="stub"></i><span class="lb">Duct Systems</span></div></li>
          <li><div class="node"><button class="tg plus" aria-label="Expand"></button><i class="stub"></i><span class="lb">Ducts</span></div></li>
          <li><div class="node"><button class="tg plus" aria-label="Expand"></button><i class="stub"></i><span class="lb">Flex Ducts</span></div></li>
          <li><div class="node"><button class="tg plus" aria-label="Expand"></button><i class="stub"></i><span class="lb">Flex Pipes</span></div></li>
          <li><div class="node"><button class="tg plus" aria-label="Expand"></button><i class="stub"></i><span class="lb">Floors</span></div></li>
          <li><div class="node"><button class="tg plus" aria-label="Expand"></button><i class="stub"></i><span class="lb">Pattern</span></div></li>
          <li><div class="node"><button class="tg plus" aria-label="Expand"></button><i class="stub"></i><span class="lb">Pipes</span></div></li>
          <li><div class="node"><button class="tg plus" aria-label="Expand"></button><i class="stub"></i><span class="lb">Piping Systems</span></div></li>
          <li><div class="node"><button class="tg plus" aria-label="Expand"></button><i class="stub"></i><span class="lb">Profiles</span></div></li>
          <li><div class="node"><button class="tg plus" aria-label="Expand"></button><i class="stub"></i><span class="lb">Railings</span></div></li>
          <li><div class="node"><button class="tg plus" aria-label="Expand"></button><i class="stub"></i><span class="lb">Ramps</span></div></li>
          <li><div class="node"><button class="tg plus" aria-label="Expand"></button><i class="stub"></i><span class="lb">Roofs</span></div></li>
          <li><div class="node"><button class="tg plus" aria-label="Expand"></button><i class="stub"></i><span class="lb">Stairs</span></div></li>
          <li><div class="node"><button class="tg plus" aria-label="Expand"></button><i class="stub"></i><span class="lb">Structural Beam Systems</span></div></li>
          <li><div class="node"><button class="tg plus" aria-label="Expand"></button><i class="stub"></i><span class="lb">Structural Foundations</span></div></li>
          <li><div class="node"><button class="tg plus" aria-label="Expand"></button><i class="stub"></i><span class="lb">Structural Rebar</span></div></li>
          <li><div class="node"><button class="tg plus" aria-label="Expand"></button><i class="stub"></i><span class="lb">Walls</span></div></li>
        </ul>
      </li>
      <li><div class="node"><button class="tg plus" aria-label="Expand"></button><i class="stub"></i><svg class="i16" viewBox="0 0 16 16"><path class="k" stroke-width="1.300" d="M4 1.500H1.500v13H4M12 1.500h2.500v13H12"/><circle class="kf" cx="7" cy="6.500" r="3.500"/><path fill="#c5d6dc" stroke="#3b3f4a" d="M6.500 7l3-2 3 2v4l-3 2-3-2z"/></svg><span class="lb">Groups</span></div></li>
      <li><div class="node"><i class="stub leaf"></i><svg class="i16" viewBox="0 0 16 16"><path fill="none" stroke="#a86f00" stroke-width="2.600" d="M3.500 6h2a2 2 0 0 1 0 4.500h-2a2 2 0 0 1 0-4.500zM10.500 6h2a2 2 0 0 1 0 4.500h-2a2 2 0 0 1 0-4.500z"/><path fill="none" stroke="#f5bb2a" stroke-width="1.300" d="M3.500 6h2a2 2 0 0 1 0 4.500h-2a2 2 0 0 1 0-4.500zM10.500 6h2a2 2 0 0 1 0 4.500h-2a2 2 0 0 1 0-4.500zM5 8.300h6"/></svg><span class="lb">Revit Links</span></div></li>
    </ul>
  </aside>
</main>

<footer class="status">
  <p>Click to select, TAB for alternates, CTRL adds, SHIFT unselects.</p>
  <div class="worksets">
    <svg class="i16" viewBox="0 0 16 16"><path fill="#999" d="M5 4l3-4 3 4v3H5zM0 16v-6l2-3h3l1 3v6zM10 16v-6l1-3h3l2 3v6zM7 8h2v8H7z"/><path stroke="#e4e4e4" d="M3.500 9v6M12.500 9v6M8 3v4"/></svg>
    <div class="select-wrap wide"><select aria-label="Workset" disabled></select><svg class="i10" viewBox="0 0 10 10"><path fill="none" stroke="#999" stroke-width="1.300" d="M1 3l4 4 4-4"/></svg></div>
    <span class="count"><svg class="i16" viewBox="0 0 16 16"><path fill="#eee" stroke="#999" d="M4.500.500h10v5h-10z"/><path fill="#999" d="M8 6h5L8 12v1h2v3H0v-3l3-3h2z"/></svg>:0</span>
    <button aria-label="Design Options"><svg class="i16" viewBox="0 0 16 16"><path class="kf" d="M1.500.500h13v15h-13z"/><path class="d" d="M1 0h14v3H1z"/><path class="k" d="M3 5.500h3v2H3zM8 6.500h5M4.500 8v5.500H7M8 10.500h5M8 13.500h5"/></svg></button>
    <button aria-label="Add to Set"><svg class="i16" viewBox="0 0 16 16"><path fill="#999" d="M2 0h14v16H6l5-5-4-4v3H2z"/><path fill="none" stroke="#eee" stroke-width="1.500" d="M1 11.500h8M6 8l3.500 3.500L6 15"/></svg></button>
    <div class="select-wrap wide"><select aria-label="Design option" disabled><option>Main Model</option></select><svg class="i10" viewBox="0 0 10 10"><path fill="none" stroke="#999" stroke-width="1.300" d="M1 3l4 4 4-4"/></svg></div>
  </div>
  <div class="sel-tools">
    <button aria-label="Select Links"><svg class="i16" viewBox="0 0 16 16"><path fill="none" stroke="#a86f00" stroke-width="2.600" d="M3.500 1.800h2a2 2 0 0 1 0 4h-2a2 2 0 0 1 0-4zM10.500 1.800h2a2 2 0 0 1 0 4h-2a2 2 0 0 1 0-4z"/><path fill="none" stroke="#f5bb2a" stroke-width="1.400" d="M3.500 1.800h2a2 2 0 0 1 0 4h-2a2 2 0 0 1 0-4zM10.500 1.800h2a2 2 0 0 1 0 4h-2a2 2 0 0 1 0-4zM6 4h4"/><path class="ptr" d="M6.500 4v10l2.300-2 1.700 4 1.800-.8-1.600-3.700h3z"/></svg></button>
    <button aria-label="Select Underlay"><svg class="i16" viewBox="0 0 16 16"><path class="bf" d="M1 6l6-5h8l-5 5zM1 13l6-5h8l-5 5z"/><path fill="#fff" stroke="#2579c4" d="M1 9.500l5-4h8l-5 4z"/><path class="ptr" d="M8.500 4v10l2.300-2 1.700 4 1.800-.8-1.600-3.700h3z"/></svg></button>
    <button aria-label="Select Pinned"><svg class="i16" viewBox="0 0 16 16"><path fill="#f3a77c" stroke="#b34a1c" d="M1.500.500h9v3l-1.500 1v3l2 2.500h-10l2-2.500v-3l-1.500-1z"/><path stroke="#555" d="M6 10v5"/><path class="ptr" d="M8.500 4v10l2.300-2 1.700 4 1.800-.8-1.600-3.700h3z"/></svg></button>
    <button aria-label="Select by Face"><svg class="i16" viewBox="0 0 16 16"><path class="bf" stroke-width="1.300" d="M1 4l9-3v10l-9 4z"/><path class="ptr" d="M7.500 4v10l2.300-2 1.700 4 1.800-.8-1.600-3.700h3z"/></svg></button>
    <button aria-label="Drag on Selection"><svg class="i16" viewBox="0 0 16 16"><path stroke="#111" stroke-width="1.300" fill="none" d="M4.500 0v9M0 4.500h9M3 1.500L4.500 0 6 1.500M3 7.500L4.500 9 6 7.500M1.500 3L0 4.500 1.500 6"/><path stroke="#c3201a" stroke-width="2.200" d="M10 0l5 6M15 0l-5 6"/><path class="ptr" d="M9.500 6v8l2-1.500L13 16l1.600-.7-1.400-3.300h2.500z"/></svg></button>
    <button aria-label="Background Processes"><svg class="i16" viewBox="0 0 16 16"><circle cx="8" cy="8" r="5.500" fill="none" stroke="#a6a6a6" stroke-width="3" stroke-dasharray="3.300 1"/></svg></button>
    <span class="count dim"><svg class="i16" viewBox="0 0 16 16"><path fill="#e8eaee" stroke="#4a4f5a" d="M.5 1.500h15v2L10 9v6H6.500V9L.5 3.500z"/><path stroke="#4a4f5a" d="M1 4h14"/></svg>:0</span>
  </div>
  <i class="stat-sep"></i><i class="stat-sep last"></i>
</footer>

</div>
</body>
</html>
```
FILE: styles.css
```css
* { box-sizing: border-box; }
html, body { height: 100%; margin: 0; }
body {
  font-family: "Noto Sans", "Open Sans", sans-serif;
  font-size: 11px;
  line-height: 16px;
  color: #111;
  background: #808080;
}
button, input, select { font: inherit; color: inherit; margin: 0; padding: 0; border: 0; border-radius: 0; }
button { background: none; display: flex; align-items: center; justify-content: center; }
h1, h2, p, ul { margin: 0; padding: 0; font-size: inherit; font-weight: 400; list-style: none; }
svg { display: block; flex: none; }

.window { display: flex; flex-direction: column; min-height: 100%; padding: 0 3px 3px; }

/* icon sizes and paints */
.i10 { width: 10px; height: 10px; }
.i14 { width: 14px; height: 14px; }
.i16 { width: 16px; height: 16px; }
.i24 { width: 24px; height: 24px; }
.i32 { width: 32px; height: 32px; }
.k { fill: none; stroke: #3b3f4a; }
.kf { fill: #f1f3f6; stroke: #3b3f4a; }
.d { fill: #3b3f4a; }
.b { fill: none; stroke: #2579c4; }
.bf { fill: #bfe1f3; stroke: #2579c4; }
.g { fill: none; stroke: #aeaeae; }
.gf { fill: #ececec; stroke: #aeaeae; }
.ptr { fill: #fff; stroke: #333; stroke-width: .9; }
.arrow { fill: none; stroke: #555; stroke-width: 2; }
.glyph-q { font: bold 14px "Liberation Sans", sans-serif; fill: #1c4fa0; }
.glyph-2d { font: bold 9px "Liberation Sans", sans-serif; fill: #7fa6cc; }

.tri { display: block; flex: none; width: 0; height: 0; border: 3px solid transparent; border-top-color: #4a4a4a; border-bottom: 0; }
.tri.big { border-width: 4px; border-bottom: 0; }
.tri.grey { border-top-color: #a0a0a0; }
.tri.light { border-top-color: #e6f0f6; }
.tri.mid { align-self: center; justify-self: center; }
.tri-right { width: 0; height: 0; border: 4px solid transparent; border-left-color: #4a4a4a; border-right: 0; margin-right: 6px; }

/* title bar */
.titlebar { display: flex; align-items: center; height: 34px; color: #f0f0f0; }
.qat, .infocenter { display: flex; align-items: center; flex: none; }
.qat { padding-left: 2px; }
.cell { width: 24px; height: 24px; flex: none; }
.cell.glyph-a { font: bold 18px "Liberation Sans", sans-serif; color: #3b3b3b; }
.cell.narrow { width: 16px; }
.cell.after-gap { margin-right: 4px; }
.drop { display: flex; justify-content: center; width: 12px; }
.drop.wide { width: 18px; }
.bar { width: 1px; height: 21px; margin: 0 3px; background: #a0a0a0; }
.bar.roomy { margin-left: 6px; }
.caption { flex: 1; text-align: center; font-family: "Open Sans", "Noto Sans", sans-serif; font-size: 12px; line-height: 16px; padding-bottom: 4px; white-space: nowrap; }
.search { width: 180px; height: 22px; padding: 0 3px; margin-right: 1px; background: #fff; border: 1px solid #000; color: #333; }
.search::placeholder { color: #555; font-style: italic; opacity: 1; }
.cell.user { width: auto; gap: 5px; padding: 0 5px 0 4px; }
.winbtns { display: flex; gap: 10px; padding: 0 8px 0 15px; }

/* ribbon tabs */
.tabs { display: flex; gap: 1px; height: 20px; padding-left: 1px; color: #f0f0f0; }
.tab { padding: 0 10px; white-space: nowrap; font-size: 11px; }
.tab.file { width: 45px; margin-right: 2px; background: #2b7bb3; color: #fff; }
.tab.active { background: #eee; color: #222; }
.tab.state { gap: 5px; margin-left: 11px; }

/* ribbon */
.ribbon { display: flex; background: #eee; margin-left: 1px; margin-right: -1px; height: 96px; border-bottom: 1px solid #808080; padding-top: 1px; }
.panel { display: flex; flex-direction: column; flex: none; border-right: 1px solid #d6d6d6; margin-bottom: 1px; color: #333; }
.panel:last-child { border-right: 0; }
.panel .body { display: flex; flex: 1; }
.panel h2 { display: flex; justify-content: center; align-items: center; gap: 6px; height: 18px; }
.p-select { width: 57px; }
.p-props { width: 64px; }
.p-clip { width: 80px; }
.p-geo { width: 139px; }
.p-mod { width: 238px; }
.p-view { width: 65px; }
.p-meas { width: 56px; }
.p-create { width: 83px; }
.modify-btn { flex-direction: column; width: 44px; height: 72px; margin: 2px 0 0 7px; padding-bottom: 10px; gap: 8px; background: #b7d7f2; border: 1px solid #1a6cc0; }
.cursor-ico { width: 14px; height: 22px; }
.p-props .body { flex-direction: column; align-items: center; padding-top: 3px; gap: 3px; }
.props-on { width: 38px; height: 34px; background: #b7d7f2; border: 1px solid #1a6cc0; }
.paste { flex-direction: column; justify-content: flex-start; width: 44px; margin: 4px 0 0 5px; color: #a0a0a0; }
.paste span { padding: 2px 0; }
.col3 { display: grid; grid-template-rows: repeat(3, 24px); align-items: center; padding-top: 2px; }
.col3 button { width: 25px; }
.p-clip .col3 { margin-left: 7px; }
.p-clip .col3 button { width: 18px; }
.p-geo .body { padding-left: 8px; }
.col3.named { width: 66px; }
.col3.named button { width: auto; gap: 5px; justify-content: flex-start; }
.named .tri { margin-left: 3px; }
.mid-tri { display: flex; align-items: center; padding-bottom: 2px; }
.big-grid { display: grid; grid-template-columns: repeat(4, 39px); grid-template-rows: repeat(2, 36px); padding: 1px 0 0 2px; }
.small-grid { display: grid; grid-template-columns: repeat(3, 26px); grid-template-rows: repeat(3, 24px); padding: 2px 0 0 1px; }
.view-grid { display: grid; grid-template-columns: 26px 8px 26px; grid-template-rows: repeat(3, 24px); padding: 2px 0 0 2px; }
.meas-grid { display: grid; grid-template-columns: 42px 8px; grid-template-rows: repeat(2, 36px); padding: 1px 0 0 1px; }
.create-grid { display: grid; grid-template-columns: repeat(2, 38px); grid-template-rows: repeat(2, 36px); padding: 1px 0 0 3px; }
.options-bar { height: 26px; background: #eee; margin-right: -1px; }

/* workspace */
.workspace { display: flex; flex: 1; margin-right: -1px; background: #eee; border-top: 2px solid #cacaca; }
.pane-title { display: flex; align-items: center; justify-content: space-between; height: 20px; padding: 2px 5px 0 4px; color: #444; }
.properties { display: flex; flex-direction: column; flex: none; width: 344px; padding: 0 3px 0 2px; border-right: 2px solid #c8c8c8; }
.properties .pane-title { padding: 2px 2px 0; }
.type-box { justify-content: flex-start; height: 72px; margin-bottom: 1px; padding: 2px 0 2px 2px; border: 1px solid #cdcdcd; color: #444; text-align: left; }
.type-box .thumb { display: flex; align-items: center; justify-content: center; width: 66px; height: 66px; margin-right: 4px; border: 1px solid #cdcdcd; }
.type-name { flex: 1; }
.instance { display: flex; align-items: center; height: 23px; gap: 6px; margin-bottom: 1px; }
.select-wrap { position: relative; width: 256px; height: 23px; background: #e1e1e1; border: 1px solid #adadad; }
.select-wrap select { appearance: none; display: block; width: 100%; height: 100%; padding: 0 3px; background: none; opacity: 1; }
.select-wrap > svg { position: absolute; right: 3px; top: 6px; pointer-events: none; }
.edit-type { gap: 5px; }
.grid-scroll { flex: 1; background: #fff; }
.props { width: 100%; table-layout: fixed; border-collapse: separate; border-spacing: 0; border-right: 1px dotted #777; }
.c-name { width: 165px; }
.c-end { width: 11px; }
.props tr { height: 18px; }
.props th, .props td { height: 18px; padding: 0 0 1px 2px; font-weight: 400; text-align: left; line-height: 16px; white-space: nowrap; border-bottom: 1px dotted #777; overflow: hidden; }
.props th { padding-left: 8px; border-right: 1px dotted #777; }
.props td + td { border-left: 1px dotted #777; padding: 0; }
.props .group th, .props .group td { background: #dcdcdc; border: 0; }
.props .group th { padding-left: 2px; }
.props .group td { padding: 0; }
.chev { width: 7px; height: 9px; fill: none; stroke: #111; }
.props .off th, .props .off td { color: #777; }
.unit { padding-left: 13px; }
.props td.in { padding-left: 5px; }
.props td.focus, .props td.act { padding: 0; }
.focus input { display: block; width: 100%; height: 17px; padding: 0 4px; border: 1px solid #000; background: #fff; }
.act button { width: 159px; height: 16px; margin-left: 1px; margin-top: 1px; background: #e1e1e1; border: 1px solid #adadad; border-right-width: 2px; border-bottom-width: 2px; line-height: 12px; }
.props td.chk { padding: 2px 0 0 3px; }
.chk input { appearance: none; position: relative; display: block; width: 13px; height: 13px; background: #fff; border: 1px solid #222; }
.chk input:checked::after { content: ""; position: absolute; left: 2px; top: 2px; width: 8px; height: 4px; border: solid #333; border-width: 0 0 1px 1px; transform: rotate(-45deg); }
.props-foot { display: flex; align-items: center; justify-content: space-between; height: 28px; padding: 0 1px 0 2px; }
.props-foot a { color: #0066cc; }
.props-foot button { width: 73px; height: 22px; background: #ccc; border: 1px solid #bfbfbf; color: #888; }

/* document */
.document { display: flex; flex-direction: column; flex: 1; min-width: 0; background: #fff; }
.doc-tabs { display: flex; justify-content: space-between; height: 20px; background: #ccc; }
.doc-tab { display: flex; align-items: center; width: 128px; padding: 1px 5px 0; background: #fff; font-weight: 700; color: #222; }
.doc-tab span { flex: 1; padding-left: 9px; }
.doc-list { width: 20px; }
.view-row { display: flex; flex: 1; }
.canvas { position: relative; flex: 1; min-width: 0; overflow: hidden; }
.drawing { position: absolute; width: 100%; height: 100%; }
.mark-text { font: 52px "Liberation Sans", sans-serif; }
.navbar { position: absolute; top: 2px; right: 0; width: 36px; height: 118px; display: flex; flex-direction: column; align-items: center; background: #f2f2f2; border: 2px solid #c4c4c4; border-radius: 6px; }
.navbar .corner { align-self: flex-end; padding: 0 2px 0 0; }
.navbar .wheel { margin: 10px 0 5px; }
.navbar hr { width: 26px; height: 1px; margin: 5px 0 8px; border: 0; background: #b5b5b5; }
.navbar .zoom { margin-bottom: 10px; }
.navbar .low { margin-top: auto; padding-bottom: 1px; }
.vscroll { display: flex; flex-direction: column; align-items: center; justify-content: space-between; width: 16px; margin: 2px 3px 0 0; padding: 4px 0; background: #f0f0f0; }
.thumb-v { width: 15px; height: 17px; background: #cdcdcd; }
.view-bar { display: flex; align-items: center; height: 17px; margin: 0 3px 2px 2px; background: #f0f0f0; }
.scale { padding-left: 24px; width: 73px; justify-content: flex-start; }
.vicons { display: flex; gap: 5px; padding-left: 6px; }
.hscroll { display: flex; flex: 1; align-items: center; justify-content: space-between; padding-left: 6px; }
.thumb-h { width: 17px; height: 15px; background: #cdcdcd; }
.grip { width: 9px; height: 9px; margin: 4px 1px 0 9px; }

/* project browser */
.browser { display: flex; flex-direction: column; flex: none; width: 283px; padding: 0 2px 2px 2px; border-left: 2px solid #c8c8c8; }
.browser .pane-title { padding: 2px 3px 0 2px; }
.tree { flex: 1; background: #fff; }
.tree li { position: relative; }
.tree li::before { content: ""; position: absolute; left: 8px; top: 0; bottom: 0; border-left: 1px dotted #888; }
.tree li:last-child::before { bottom: auto; height: 10px; }
.tree > li:first-child::before { top: 10px; }
.tree ul { margin-left: 20px; }
.node { position: relative; display: flex; align-items: center; height: 18px; padding-left: 4px; }
.tg { width: 9px; height: 9px; flex: none; margin-top: 2px; border: 1px solid #919191; background: linear-gradient(#2b4f9e, #2b4f9e) center / 5px 1px no-repeat, #f4f4f4; }
.tg.plus { background: linear-gradient(#2b4f9e, #2b4f9e) center / 5px 1px no-repeat, linear-gradient(#2b4f9e, #2b4f9e) center / 1px 5px no-repeat, #f4f4f4; }
.stub { width: 10px; margin-top: 2px; border-top: 1px dotted #888; }
.tree > li > .node > .stub { width: 7px; }
.tree > li > .node > .stub.leaf { width: 12px; margin-left: 4px; }
.tree > li > .node > .stub.leaf + svg { margin-left: -1px; }
.lb { padding: 0 3px; line-height: 18px; white-space: nowrap; }
.node svg + .lb { margin-left: 3px; }
.lb.sel { background: #e0e0e0; }

/* status bar */
.status { display: flex; align-items: center; height: 24px; margin-right: -1px; background: #ccc; padding: 2px 19px 0 0; }
.status p { flex: 1; padding-left: 2px; }
.worksets { display: flex; align-items: center; gap: 8px; }
.status .select-wrap { width: 204px; height: 18px; background: #fff; border-color: #e6e6e6; color: #777; }
.status .select-wrap > svg { top: 4px; }
.status .select-wrap select { color: #777; padding: 0 2px; }
.count { display: flex; align-items: center; gap: 3px; }
.worksets .count { width: 46px; }
.worksets button { margin-right: 2px; }
.sel-tools { display: flex; gap: 10px; margin-left: 227px; width: 245px; }
.sel-tools .count { gap: 0; color: #444; }
.stat-sep { width: 1px; height: 22px; background: #dedede; }
.stat-sep.last { margin-left: 7px; }
```
